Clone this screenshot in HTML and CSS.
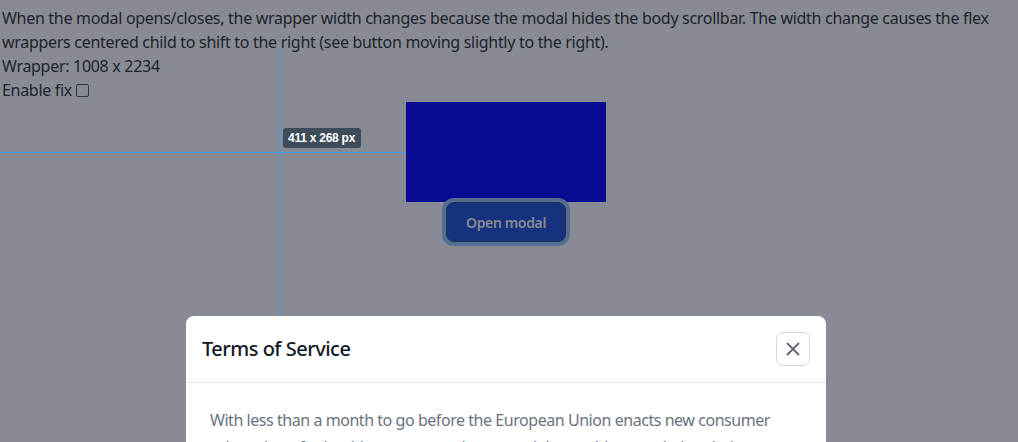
FILE: index.html
```html
<!DOCTYPE html>
<html>
<head>
<meta charset="utf-8">
<link rel="stylesheet" href="styles.css">
</head>
<body>
<div class="page">
  <p class="line">When the modal opens/closes, the wrapper width changes because the modal hides the body scrollbar. The width change causes the flex wrappers centered child to shift to the right (see button moving slightly to the right).</p>
  <div class="line">Wrapper: 1008 x 2234</div>
  <label class="line fix">Enable fix <span class="check"></span></label>
  <div class="wrapper">
    <div class="box"></div>
    <button class="open">Open modal</button>
  </div>
</div>

<div class="guide-v"></div>
<div class="guide-h"></div>
<div class="tip">411 x 268 px</div>

<div class="modal">
  <div class="modal-head">
    <h3 class="title">Terms of Service</h3>
    <button class="close" aria-label="Close">
      <svg width="14" height="14" viewBox="0 0 14 14"><path d="M1.5 1.5 L12.5 12.5 M12.5 1.5 L1.5 12.5" stroke="#5f6470" stroke-width="1.8" stroke-linecap="round" fill="none"/></svg>
    </button>
  </div>
  <div class="modal-body">
    <p>With less than a month to go before the European Union enacts new consumer privacy laws for its citizens, companies around the world are updating their terms of service agreements to comply.</p>
  </div>
</div>
</body>
</html>
```

FILE: styles.css
```css
html, body {
  margin: 0;
  padding: 0;
}
body {
  width: 1018px;
  height: 442px;
  overflow: hidden;
  background: #888b93;
  font-family: "Noto Sans", "Open Sans", sans-serif;
  font-size: 16px;
  line-height: 24px;
  letter-spacing: -0.3px;
  color: #1f232c;
  position: relative;
}
.page {
  width: 1008px;
  padding: 6px 2px 0 2px;
  box-sizing: content-box;
}
.line {
  margin: 0;
  display: block;
}
.fix {
  display: flex;
  align-items: center;
  gap: 4px;
}
.check {
  width: 13px;
  height: 13px;
  border: 1px solid #2f3440;
  border-radius: 2px;
  box-sizing: border-box;
  margin-top: 1px;
}
.wrapper {
  display: flex;
  flex-direction: column;
  align-items: center;
  width: 1008px;
}
.box {
  width: 200px;
  height: 100px;
  background: #080c93;
}
.open {
  width: 120px;
  height: 40px;
  background: #17337f;
  color: #888b93;
  border: 1px solid #253052;
  border-radius: 8px;
  font-family: inherit;
  font-size: 14px;
  font-weight: 600;
  letter-spacing: -0.35px;
  box-shadow: 0 0 0 4px #526e92;
  padding: 0;
}
.guide-v {
  position: absolute;
  left: 278px;
  top: 48px;
  width: 1px;
  height: 400px;
  background: #3d9cf0;
}
.guide-h {
  position: absolute;
  left: 0;
  top: 152px;
  width: 406px;
  height: 1px;
  background: #3d9cf0;
}
.tip {
  position: absolute;
  left: 283px;
  top: 128px;
  height: 20px;
  padding: 0 6px 0 5px;
  background: #3e4b5b;
  color: #fff;
  border-radius: 3px;
  font-family: "Liberation Sans", Arial, sans-serif;
  font-weight: 700;
  font-size: 12px;
  letter-spacing: -0.25px;
  line-height: 20px;
}
.modal {
  position: absolute;
  left: 186px;
  top: 316px;
  width: 640px;
  height: 200px;
  background: #fff;
  border-radius: 8px;
}
.modal-head {
  display: flex;
  align-items: center;
  justify-content: space-between;
  padding: 16px;
  border-bottom: 1px solid #e5e7eb;
}
.title {
  margin: 0;
  font-size: 20px;
  font-weight: 500;
  letter-spacing: -0.5px;
  color: #111827;
  line-height: 30px;
}
.close {
  width: 34px;
  height: 34px;
  border: 1px solid #d6d8dc;
  border-radius: 7px;
  background: #fff;
  display: flex;
  align-items: center;
  justify-content: center;
  padding: 0;
}
.modal-body {
  padding: 24px;
}
.modal-body p {
  margin: 0;
  font-size: 16px;
  line-height: 27px;
  letter-spacing: -0.45px;
  color: #6b7280;
}
```
